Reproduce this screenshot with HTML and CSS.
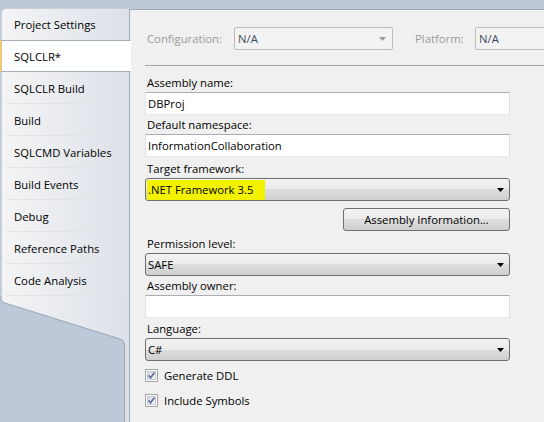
FILE: index.html
```html
<!DOCTYPE html>
<html>
<head>
<meta charset="utf-8">
<link rel="stylesheet" href="styles.css">
</head>
<body>
<div class="window">
  <div class="sidebar">
    <div class="tabs">
      <div class="tab tab-first before-sel">Project Settings</div>
      <div class="tab selected">SQLCLR*</div>
      <div class="tab">SQLCLR Build</div>
      <div class="tab">Build</div>
      <div class="tab">SQLCMD Variables</div>
      <div class="tab">Build Events</div>
      <div class="tab">Debug</div>
      <div class="tab">Reference Paths</div>
      <div class="tab">Code Analysis</div>
    </div>
    <div class="filler">
      <svg width="130" height="126" viewBox="0 0 130 126">
        <defs>
          <linearGradient id="tg" x1="0" x2="1" y1="0" y2="0">
            <stop offset="0" stop-color="#f4f4f5"/>
            <stop offset="1" stop-color="#dce1e8"/>
          </linearGradient>
        </defs>
        <path d="M1,0 H129 V126 H124.5 V48 Q124.5,44.5 120,43 L5,7 Q1.5,6 1,3 Z" fill="url(#tg)"/>
        <path d="M124.5,126 V48 Q124.5,44.5 120,43 L5,7 Q1.5,6 1,3 V0" fill="none" stroke="#98a6b8" stroke-width="1"/>
        <line x1="129.5" y1="0" x2="129.5" y2="126" stroke="#a3abb7" stroke-width="1"/>
      </svg>
    </div>
  </div>
  <div class="panel">
    <div class="config-row">
      <span class="dim-label">Configuration:</span>
      <div class="combo-disabled combo-config">
        <span>N/A</span>
        <svg width="7" height="4" viewBox="0 0 7 4"><polygon points="0,0 7,0 3.5,4" fill="#9a9a9a"/></svg>
      </div>
      <span class="dim-label platform-label">Platform:</span>
      <div class="combo-disabled combo-platform">
        <span>N/A</span>
      </div>
    </div>
    <div class="rule"></div>

    <div class="label l-first">Assembly name:</div>
    <div class="textbox">DBProj</div>

    <div class="label l-ns">Default namespace:</div>
    <div class="textbox">InformationCollaboration</div>

    <div class="label l-tf">Target framework:</div>
    <div class="combo">
      <span class="hl">.NET Framework 3.5</span>
      <svg width="7" height="4" viewBox="0 0 7 4"><polygon points="0,0 7,0 3.5,4" fill="#000"/></svg>
    </div>

    <div class="btn-row"><div class="button">Assembly Information...</div></div>

    <div class="label l-perm">Permission level:</div>
    <div class="combo">
      <span>SAFE</span>
      <svg width="7" height="4" viewBox="0 0 7 4"><polygon points="0,0 7,0 3.5,4" fill="#000"/></svg>
    </div>

    <div class="label l-owner">Assembly owner:</div>
    <div class="textbox"></div>

    <div class="label l-lang">Language:</div>
    <div class="combo">
      <span>C#</span>
      <svg width="7" height="4" viewBox="0 0 7 4"><polygon points="0,0 7,0 3.5,4" fill="#000"/></svg>
    </div>

    <div class="check-row cr-first">
      <svg class="cb" width="13" height="13" viewBox="0 0 13 13">
        <defs>
          <linearGradient id="cbg" x1="0" y1="0" x2="1" y2="1">
            <stop offset="0" stop-color="#d8dbe0"/>
            <stop offset="1" stop-color="#f6f6f6"/>
          </linearGradient>
        </defs>
        <rect x="0.5" y="0.5" width="12" height="12" fill="#fff" stroke="#a2a4a8"/>
        <rect x="2.5" y="2.5" width="8" height="8" fill="url(#cbg)" stroke="#c8cacf"/>
        <path d="M3.6,6.4 L5.6,8.8 L9.4,3.4" fill="none" stroke="#5c72ab" stroke-width="1.7"/>
      </svg>
      <span>Generate DDL</span>
    </div>
    <div class="check-row cr-second">
      <svg class="cb" width="13" height="13" viewBox="0 0 13 13">
        <rect x="0.5" y="0.5" width="12" height="12" fill="#fff" stroke="#a2a4a8"/>
        <rect x="2.5" y="2.5" width="8" height="8" fill="url(#cbg)" stroke="#c8cacf"/>
        <path d="M3.6,6.4 L5.6,8.8 L9.4,3.4" fill="none" stroke="#5c72ab" stroke-width="1.7"/>
      </svg>
      <span>Include Symbols</span>
    </div>
  </div>
</div>
</body>
</html>
```

FILE: styles.css
```css
html, body {
  margin: 0;
  padding: 0;
}
body {
  width: 544px;
  height: 422px;
  overflow: hidden;
  background: #bdc9d9;
  font-family: "Open Sans", "Noto Sans", sans-serif;
  font-size: 11.3px;
  color: #000;
}
.window {
  display: flex;
  height: 422px;
}
.sidebar {
  width: 130px;
  flex: none;
  display: flex;
  flex-direction: column;
  padding-top: 8px;
  box-sizing: border-box;
}
.tabs {
  margin-left: 1px;
  border-left: 1px solid #cdd2d9;
  border-top: 1px solid #c9cfd8;
  border-top-left-radius: 5px;
  background: linear-gradient(to right, #f4f4f5, #dce1e8);
}
.tab {
  position: relative;
  height: 32px;
  box-sizing: border-box;
  display: flex;
  align-items: center;
  padding-left: 12px;
  border-right: 1px solid #a3abb7;
  white-space: nowrap;
}
.tab::after {
  content: "";
  position: absolute;
  left: 4px;
  right: 6px;
  bottom: 0;
  height: 1px;
  background: #e1e3e7;
}
.tab-first {
  height: 31px;
}
.tab.before-sel::after,
.tab.selected::after {
  display: none;
}
.tab.selected {
  background: #fff;
  border-top: 1px solid #a7aeb9;
  border-bottom: 1px solid #a7aeb9;
  border-right-color: #fff;
  border-left: 2px solid #f3c979;
  margin-left: -2px;
  margin-right: -1px;
  padding-left: 12px;
}
.filler {
  flex: 1;
  overflow: hidden;
}
.filler svg {
  display: block;
}
.panel {
  flex: 1;
  margin-top: 9px;
  border-top: 1px solid #a3a9b1;
  background: #f0f0f0;
  padding: 0 34px 0 15px;
  overflow: hidden;
  min-width: 0;
}
.config-row {
  display: flex;
  align-items: center;
  margin-top: 17px;
  height: 23px;
  white-space: nowrap;
}
.dim-label {
  color: #9b9b9b;
  padding-left: 2px;
  width: 87px;
  flex: none;
}
.platform-label {
  width: 60px;
  margin-left: 20px;
}
.combo-disabled {
  height: 23px;
  box-sizing: border-box;
  border: 1px solid #bcbcbc;
  border-radius: 2px;
  background: #f3f3f3;
  color: #3e4a5a;
  display: flex;
  align-items: center;
  justify-content: space-between;
  padding: 0 6px 0 3px;
  flex: none;
}
.combo-config {
  width: 159px;
}
.combo-platform {
  width: 100px;
}
.rule {
  margin-top: 15px;
  margin-right: -34px;
  height: 1px;
  background: #a5a5a5;
}
.label {
  height: 19px;
  line-height: 19px;
  padding-left: 2px;
  white-space: nowrap;
}
.l-first { margin-top: 7px; }
.l-ns { margin-top: 0; }
.l-tf { margin-top: 2px; }
.l-perm { margin-top: 3px; }
.l-owner { margin-top: 0; }
.l-lang { margin-top: 1px; }
.textbox {
  height: 23px;
  box-sizing: border-box;
  background: #fff;
  border: 1px solid;
  border-color: #abadb3 #dbdfe6 #e3e9ef #e2e3ea;
  padding-left: 2px;
  line-height: 21px;
  white-space: nowrap;
}
.combo {
  height: 23px;
  box-sizing: border-box;
  border: 1px solid #707070;
  border-radius: 3px;
  background: linear-gradient(to bottom, #f2f2f2 0%, #ebebeb 50%, #dddddd 50%, #cfcfcf 100%);
  display: flex;
  align-items: center;
  justify-content: space-between;
  padding: 0 5px 0 1px;
}
.combo span {
  padding-left: 1px;
}
.combo .hl {
  background: #f2f200;
  padding: 0 12px 0 1px;
  line-height: 20px;
  margin-top: 1px;
}
.btn-row {
  display: flex;
  justify-content: flex-end;
  margin-top: 7px;
}
.button {
  width: 167px;
  height: 23px;
  box-sizing: border-box;
  border: 1px solid #707070;
  border-radius: 3px;
  background: linear-gradient(to bottom, #f2f2f2 0%, #ebebeb 50%, #dddddd 50%, #cfcfcf 100%);
  display: flex;
  align-items: center;
  justify-content: center;
}
.check-row {
  display: flex;
  align-items: center;
  height: 17px;
}
.cr-first { margin-top: 6px; }
.cr-second { margin-top: 8px; }
.cb {
  display: block;
  margin-right: 6px;
  flex: none;
}
```
